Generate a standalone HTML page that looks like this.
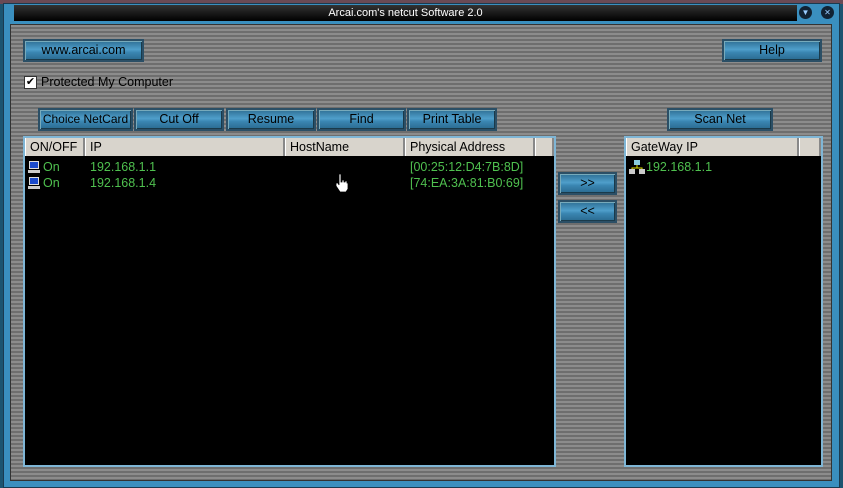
<!DOCTYPE html>
<html><head><style>
*{margin:0;padding:0;box-sizing:border-box}
body{width:843px;height:488px;overflow:hidden;background:#1c5470;font-family:"Liberation Sans",sans-serif;font-size:12px;position:relative}
.abs{position:absolute;white-space:nowrap}
.top{left:0;top:0;width:843px;height:4px;background:#6a4a55}
.frame{left:3px;top:3px;width:837px;height:485px;background:#3a8fbf;border:1px solid #1a3a50}
.title{left:14px;top:5px;width:783px;height:16px;background:linear-gradient(#333,#000);color:#fff;font-size:11px;text-align:center;line-height:16px}
.body{left:10px;top:24px;width:822px;height:457px;border:1px solid #333;background:repeating-linear-gradient(#8c8c8c 0 2px,#6e6e6e 2px 4px)}
.btn{height:23px;background:linear-gradient(#2f6f95,#4f9fcb 45%,#3a86b2 60%,#2a6a90);border:2px solid #2b4f66;box-shadow:inset 1px 1px 0 #7ab,inset -1px -1px 0 #1a3a4a;color:#000;text-align:center;line-height:19px;font-size:12.5px}
.list{background:#000;border:2px solid #7fb6d6}
.hdr{position:absolute;top:0;height:18px;background:#d8d4cc;border-right:2px solid #888;border-left:1px solid #fff;line-height:18px;padding-left:4px;color:#000;font-size:12.5px;white-space:nowrap;overflow:hidden}
.g{color:#4fc04f;position:absolute;font-size:12.5px;line-height:16px;white-space:nowrap}
.pc{position:absolute;width:12px;height:12px}
</style></head><body>
<div class="abs top"></div>
<div class="abs frame"></div>
<div class="abs title">Arcai.com's netcut Software 2.0</div>
<div class="abs" style="left:799px;top:6px;width:13px;height:13px;border-radius:50%;background:#123;color:#9cf;font-size:8px;text-align:center;line-height:13px">▼</div>
<div class="abs" style="left:821px;top:6px;width:13px;height:13px;border-radius:50%;background:#123;color:#9cf;font-size:8px;text-align:center;line-height:13px">✕</div>
<div class="abs body"></div>

<div class="abs btn" style="left:23px;top:39px;width:121px">www.arcai.com</div>
<div class="abs btn" style="left:722px;top:39px;width:100px">Help</div>

<div class="abs" style="left:24px;top:76px;width:13px;height:13px;background:#fff;border:1px solid #333;font-size:11px;line-height:11px;text-align:center;color:#000">✔</div>
<div class="abs" style="left:41px;top:75px;color:#000;font-size:12.5px">Protected My Computer</div>

<div class="abs btn" style="left:38px;top:108px;width:95px;font-size:12px">Choice NetCard</div>
<div class="abs btn" style="left:134px;top:108px;width:90px">Cut Off</div>
<div class="abs btn" style="left:226px;top:108px;width:90px">Resume</div>
<div class="abs btn" style="left:317px;top:108px;width:89px">Find</div>
<div class="abs btn" style="left:407px;top:108px;width:90px">Print Table</div>
<div class="abs btn" style="left:667px;top:108px;width:106px">Scan Net</div>

<div class="abs list" style="left:23px;top:136px;width:533px;height:331px">
 <div class="hdr" style="left:0;width:60px">ON/OFF</div>
 <div class="hdr" style="left:60px;width:200px">IP</div>
 <div class="hdr" style="left:260px;width:120px">HostName</div>
 <div class="hdr" style="left:380px;width:130px">Physical Address</div>
 <div class="hdr" style="left:510px;width:19px"></div>
 <div class="pc" style="left:3px;top:23px"><svg width="12" height="12"><rect x="1" y="0" width="10" height="8" fill="#ddd"/><rect x="2" y="1" width="8" height="6" fill="#1a4acc"/><rect x="0" y="9" width="12" height="3" fill="#ccc"/></svg></div>
 <div class="pc" style="left:3px;top:39px"><svg width="12" height="12"><rect x="1" y="0" width="10" height="8" fill="#ddd"/><rect x="2" y="1" width="8" height="6" fill="#1a4acc"/><rect x="0" y="9" width="12" height="3" fill="#ccc"/></svg></div>
 <div class="g" style="left:18px;top:21px">On</div>
 <div class="g" style="left:18px;top:37px">On</div>
 <div class="g" style="left:65px;top:21px">192.168.1.1</div>
 <div class="g" style="left:65px;top:37px">192.168.1.4</div>
 <div class="g" style="left:385px;top:21px">[00:25:12:D4:7B:8D]</div>
 <div class="g" style="left:385px;top:37px">[74:EA:3A:81:B0:69]</div>
 <svg class="abs" style="left:310px;top:35px" width="14" height="20"><path d="M4 1h2v8h1V7h2v2h1V8h2v2h1v6l-2 3H5L1 13v-3h2l1 2z" fill="#fff" stroke="#000" stroke-width="0.8"/></svg>
</div>

<div class="abs btn" style="left:558px;top:172px;width:59px">&gt;&gt;</div>
<div class="abs btn" style="left:558px;top:200px;width:59px">&lt;&lt;</div>

<div class="abs list" style="left:624px;top:136px;width:199px;height:331px">
 <div class="hdr" style="left:0;width:173px">GateWay IP</div>
 <div class="hdr" style="left:173px;width:22px"></div>
 <div class="pc" style="left:3px;top:22px;width:16px;height:15px"><svg width="16" height="15"><rect x="5" y="0" width="6" height="5" fill="#8cd"/><rect x="0" y="9" width="6" height="5" fill="#ccc"/><rect x="10" y="9" width="6" height="5" fill="#ccc"/><path d="M8 5V8M3 9V8H13V9" stroke="#dd0" fill="none"/></svg></div>
 <div class="g" style="left:20px;top:21px">192.168.1.1</div>
</div>
</body></html>
